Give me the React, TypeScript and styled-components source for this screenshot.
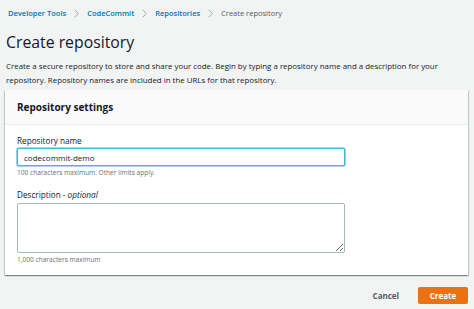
import styled, { createGlobalStyle } from 'styled-components';

const GlobalStyle = createGlobalStyle`
  html, body {
    margin: 0;
    padding: 0;
    background: #f2f3f3;
  }
  body {
    font-family: 'Open Sans', 'Liberation Sans', sans-serif;
    color: #16191f;
  }
`;

const crumbs = ['Developer Tools', 'CodeCommit', 'Repositories'];

const Chevron = () => (
  <svg width='5' height='9' viewBox='0 0 5 9'>
    <path d='M0.8 0.8l3.5 3.7-3.5 3.7' fill='none' stroke='#95a5a6' strokeWidth='0.9' />
  </svg>
);

const App = () => {
  return (
    <Page>
      <GlobalStyle />
      <Breadcrumbs>
        {crumbs.map((c) => (
          <Crumb key={c}>
            <CrumbLink>{c}</CrumbLink>
            <Chevron />
          </Crumb>
        ))}
        <CrumbCurrent>Create repository</CrumbCurrent>
      </Breadcrumbs>

      <Title>Create repository</Title>
      <Intro>
        Create a secure repository to store and share your code. Begin by typing a repository name and a description
        for your repository. Repository names are included in the URLs for that repository.
      </Intro>

      <Panel>
        <PanelHeader>Repository settings</PanelHeader>
        <PanelBody>
          <Field>
            <Label>Repository name</Label>
            <TextInput $focused defaultValue='codecommit-demo' />
            <Hint>100 characters maximum. Other limits apply.</Hint>
          </Field>
          <Field>
            <Label>
              Description - <em>optional</em>
            </Label>
            <TextArea />
            <Hint>1,000 characters maximum</Hint>
          </Field>
        </PanelBody>
      </Panel>

      <Actions>
        <LinkButton>Cancel</LinkButton>
        <PrimaryButton>Create</PrimaryButton>
      </Actions>
    </Page>
  );
};

export default App;

const Page = styled.div`
  width: 474px;
  height: 309px;
  overflow: hidden;
  padding: 0 6px 0 5px;
  box-sizing: border-box;
`;

const Breadcrumbs = styled.nav`
  display: flex;
  align-items: center;
  height: 26px;
  padding-left: 3px;
  font-size: 7.5px;
`;

const Crumb = styled.span`
  display: flex;
  align-items: center;
  gap: 8px;
  margin-right: 8px;
`;

const CrumbLink = styled.span`
  color: #0073bb;
  font-weight: 600;
`;

const CrumbCurrent = styled.span`
  color: #545b64;
`;

const Title = styled.h1`
  margin: 4px 0 0 1px;
  font-size: 15.8px;
  font-weight: 400;
  line-height: 24px;
`;

const Intro = styled.p`
  margin: 5px 0 0 1px;
  font-size: 7.9px;
  line-height: 14px;
`;

const Panel = styled.section`
  margin-top: 3px;
  background: #fff;
  box-shadow: 0 1px 1px 0 rgba(0, 28, 36, 0.3), 1px 1px 1px 0 rgba(0, 28, 36, 0.15),
    -1px 1px 1px 0 rgba(0, 28, 36, 0.15);
`;

const PanelHeader = styled.h2`
  margin: 0;
  padding: 0 12px;
  height: 34px;
  display: flex;
  align-items: center;
  background: #fafafa;
  border-bottom: 1px solid #eaeded;
  font-size: 10px;
  font-weight: 700;
`;

const PanelBody = styled.div`
  display: flex;
  flex-direction: column;
  gap: 11px;
  padding: 10px 123px 10px 12px;
`;

const Field = styled.div`
  display: flex;
  flex-direction: column;
`;

const Label = styled.label`
  font-size: 8.2px;
  line-height: 12px;
  margin-bottom: 1px;

  em {
    font-style: italic;
  }
`;

const TextInput = styled.input<{ $focused?: boolean }>`
  height: 18px;
  box-sizing: border-box;
  padding: 0 6px;
  border: 1px solid ${(p) => (p.$focused ? '#44b9d6' : '#aab7b8')};
  box-shadow: ${(p) => (p.$focused ? '0 0 0 0.6px #44b9d6' : 'none')};
  border-radius: 2px;
  font-family: inherit;
  font-size: 8px;
  color: #16191f;
  outline: none;
`;

const TextArea = styled.textarea`
  height: 50px;
  margin-top: 1px;
  box-sizing: border-box;
  border: 1px solid #aab7b8;
  border-radius: 2px;
  font-family: inherit;
  font-size: 8px;
  resize: vertical;
  outline: none;
`;

const Hint = styled.div`
  font-size: 6.6px;
  line-height: 10px;
  margin-top: 2px;
  color: #687078;
`;

const Actions = styled.div`
  display: flex;
  justify-content: flex-end;
  align-items: center;
  gap: 19px;
  margin-top: 12px;
`;

const LinkButton = styled.button`
  border: none;
  background: none;
  padding: 0;
  font-family: inherit;
  font-size: 8px;
  font-weight: 700;
  color: #545b64;
`;

const PrimaryButton = styled.button`
  width: 50px;
  height: 17px;
  border: none;
  border-radius: 2px;
  background: #ec7211;
  color: #fff;
  font-family: inherit;
  font-size: 8px;
  font-weight: 700;
`;
